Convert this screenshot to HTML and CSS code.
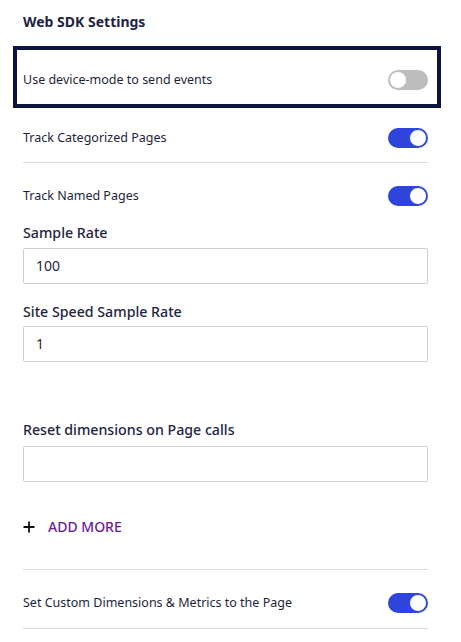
FILE: index.html
```html
<!DOCTYPE html>
<html lang="en">
<head>
<meta charset="utf-8">
<title>Web SDK Settings</title>
<link rel="stylesheet" href="styles.css">
</head>
<body>
<div class="panel">
  <h2 class="title">Web SDK Settings</h2>

  <div class="row row-focused">
    <span class="row-label">Use device-mode to send events</span>
    <span class="toggle"><span class="knob"></span></span>
  </div>

  <div class="row row-cat">
    <span class="row-label">Track Categorized Pages</span>
    <span class="toggle on"><span class="knob"></span></span>
  </div>
  <div class="divider"></div>

  <div class="row row-named">
    <span class="row-label">Track Named Pages</span>
    <span class="toggle on"><span class="knob"></span></span>
  </div>

  <div class="field field-sample">
    <label class="field-label">Sample Rate</label>
    <div class="input">100</div>
  </div>

  <div class="field field-speed">
    <label class="field-label">Site Speed Sample Rate</label>
    <div class="input">1</div>
  </div>

  <div class="field field-reset">
    <label class="field-label">Reset dimensions on Page calls</label>
    <div class="input"></div>
  </div>

  <div class="add-more">
    <svg class="plus" width="12" height="12" viewBox="0 0 12 12" aria-hidden="true">
      <path d="M6 0.5V11.5M0.5 6H11.5" stroke="#111" stroke-width="1.8" fill="none"/>
    </svg>
    <span class="add-text">ADD MORE</span>
  </div>

  <div class="divider divider-add"></div>

  <div class="row row-custom">
    <span class="row-label">Set Custom Dimensions &amp; Metrics to the Page</span>
    <span class="toggle on"><span class="knob"></span></span>
  </div>
  <div class="divider"></div>
</div>
</body>
</html>
```

FILE: styles.css
```css
* { box-sizing: border-box; }

html, body {
  margin: 0;
  padding: 0;
  background: #ffffff;
}

body {
  font-family: "Noto Sans", "Open Sans", sans-serif;
  color: #1d1f3b;
}

.panel {
  width: 405px;
  margin-left: 23px;
}

.title {
  margin: 0;
  padding-top: 12px;
  height: 46px;
  font-size: 14px;
  font-weight: 700;
  line-height: 20px;
  color: #22243f;
}

.row {
  display: flex;
  align-items: center;
  justify-content: space-between;
}

.row-label {
  font-size: 12.5px;
  line-height: 20px;
}

.row-focused {
  margin-left: -10px;
  width: 428px;
  height: 62px;
  border: 4px solid #0e1440;
  padding: 6px 9px 0 6px;
}

.row-cat {
  padding-top: 20px;
  height: 54px;
  align-items: flex-start;
}

.row-named {
  padding-top: 23px;
  height: 51px;
  align-items: flex-start;
}

.row-custom {
  padding-top: 23px;
  height: 58px;
  align-items: flex-start;
}

.divider {
  height: 1px;
  background: #dcdcdc;
}

.toggle {
  position: relative;
  width: 40px;
  height: 20px;
  border-radius: 10px;
  background: #bdbdbd;
  flex: none;
}

.knob {
  position: absolute;
  top: 1px;
  left: 1px;
  width: 18px;
  height: 18px;
  border-radius: 50%;
  background: #ffffff;
  border: 1px solid #bdbdbd;
}

.toggle.on {
  background: #2f44db;
}

.toggle.on .knob {
  left: 21px;
  border-color: #2f44db;
}

.field-label {
  display: block;
  font-size: 14.2px;
  font-weight: 500;
  line-height: 20px;
  color: #22243f;
}

.input {
  height: 36px;
  border: 1px solid #cfcfcf;
  border-radius: 2px;
  padding-left: 12px;
  font-size: 14px;
  line-height: 34px;
  color: #1d1f3b;
}

.field-sample { margin-top: 9px; }
.field-sample .input { margin-top: 5px; }

.field-speed { margin-top: 18px; }
.field-speed .input { margin-top: 4px; }

.field-reset { margin-top: 58px; }
.field-reset .input { margin-top: 6px; }

.add-more {
  margin-top: 35px;
  display: flex;
  align-items: center;
  height: 20px;
}

.plus { flex: none; }

.add-text {
  margin-left: 13px;
  font-size: 14px;
  font-weight: 500;
  line-height: 20px;
  color: #6a1b9a;
}

.divider-add { margin-top: 32px; }
```
